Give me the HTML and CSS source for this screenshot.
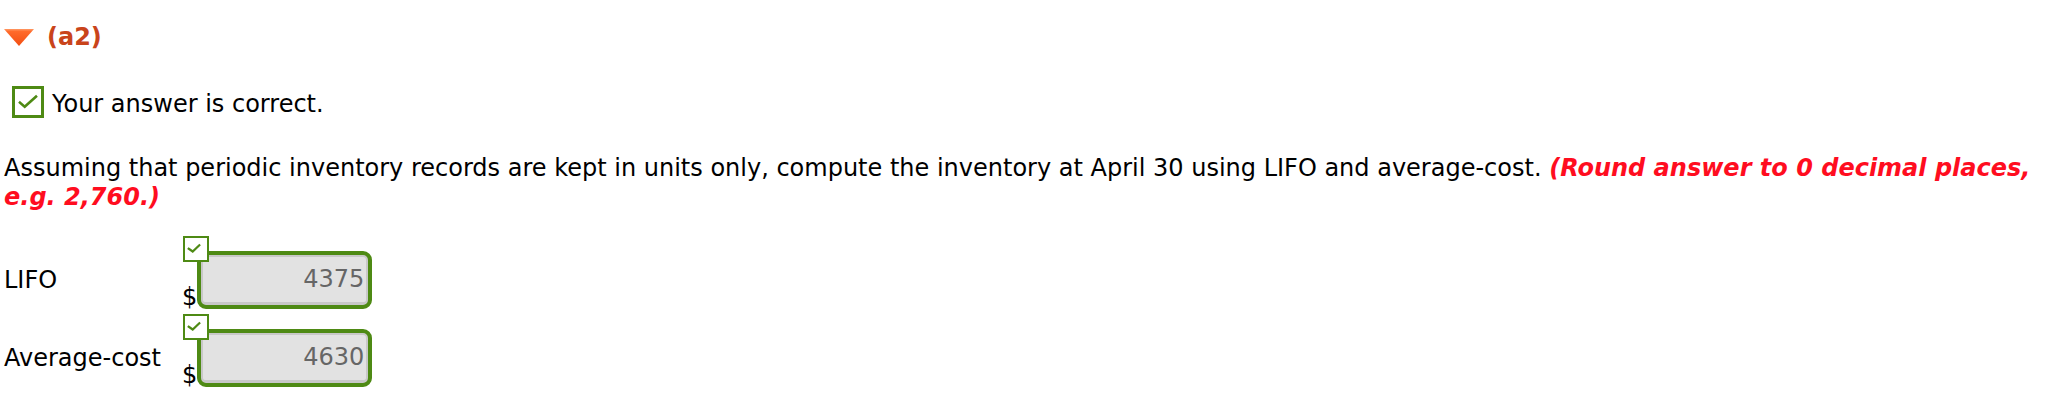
FILE: index.html
```html
<!DOCTYPE html>
<html lang="en">
<head>
<meta charset="utf-8">
<title>(a2)</title>
<link rel="stylesheet" href="styles.css">
</head>
<body>
<div class="part">
  <div class="part-head">
    <svg class="tri" width="30" height="17" viewBox="0 0 30 17" aria-hidden="true">
      <defs>
        <linearGradient id="tg" x1="0" y1="0" x2="0" y2="1">
          <stop offset="0" stop-color="#ff9a66"/>
          <stop offset="0.15" stop-color="#ff6a2a"/>
          <stop offset="1" stop-color="#f24e12"/>
        </linearGradient>
      </defs>
      <polygon points="0,0 30,0 15,17" fill="url(#tg)"/>
    </svg>
    <span class="part-label">(a2)</span>
  </div>

  <div class="feedback">
    <span class="chk chk-big">
      <svg width="26" height="26" viewBox="0 0 26 26" aria-hidden="true"><polyline points="5,13.7 9.7,17.7 21,7.7" fill="none" stroke="#4e8a14" stroke-width="2.6" stroke-linecap="square"/></svg>
    </span>
    <span class="feedback-text">Your answer is correct.</span>
  </div>

  <p class="question"><span class="q-text">Assuming that periodic inventory records are kept in units only, compute the inventory at April 30 using LIFO and average-cost.</span> <em class="hint">(Round answer to 0 decimal places,</em><br><em class="hint">e.g. 2,760.)</em></p>

  <div class="answers">
    <div class="row">
      <div class="label">LIFO</div>
      <div class="cell">
        <span class="chk chk-small">
          <svg width="22" height="22" viewBox="0 0 22 22" aria-hidden="true"><polyline points="3.7,10.7 7.7,13.5 14.3,7.3" fill="none" stroke="#4e8a14" stroke-width="2.2" stroke-linecap="square"/></svg>
        </span>
        <span class="cur">$</span>
        <div class="box"><div class="inp">4375</div></div>
      </div>
    </div>
    <div class="row">
      <div class="label">Average-cost</div>
      <div class="cell">
        <span class="chk chk-small">
          <svg width="22" height="22" viewBox="0 0 22 22" aria-hidden="true"><polyline points="3.7,10.7 7.7,13.5 14.3,7.3" fill="none" stroke="#4e8a14" stroke-width="2.2" stroke-linecap="square"/></svg>
        </span>
        <span class="cur">$</span>
        <div class="box"><div class="inp">4630</div></div>
      </div>
    </div>
  </div>
</div>
</body>
</html>
```

FILE: styles.css
```css
html, body {
  margin: 0;
  padding: 0;
  background: #ffffff;
}

body {
  font-family: "DejaVu Sans", Verdana, sans-serif;
  font-size: 24px;
  color: #000000;
}

.part {
  padding: 22px 4px 0 4px;
}

.part-head {
  display: flex;
  align-items: center;
  height: 30px;
}

.tri {
  display: block;
  flex: none;
}

.part-label {
  margin-left: 13px;
  font-weight: bold;
  color: #c9441b;
  line-height: 30px;
}

.feedback {
  display: flex;
  align-items: flex-start;
  height: 32px;
  margin-top: 34px;
  padding-left: 8px;
}

.chk {
  display: flex;
  align-items: center;
  justify-content: center;
  box-sizing: border-box;
  background: #ffffff;
  border-style: solid;
  border-color: #4e8a14;
}

.chk-big {
  width: 32px;
  height: 32px;
  border-width: 3px;
  flex: none;
}

.feedback-text {
  margin-left: 8px;
  line-height: 32px;
  padding-top: 2px;
}

.question {
  margin: 36px 0 0 0;
  line-height: 29px;
}

.hint {
  color: #ff0d1f;
  font-weight: bold;
  font-style: italic;
}

.answers {
  margin-top: 24px;
}

.row {
  display: flex;
  align-items: center;
  padding-top: 15px;
  margin-bottom: 5px;
}

.label {
  width: 178px;
  flex: none;
  line-height: 29px;
}

.cell {
  position: relative;
  display: flex;
  align-items: flex-end;
}

.chk-small {
  position: absolute;
  left: 1px;
  top: -15px;
  width: 26px;
  height: 26px;
  border-width: 2px;
  z-index: 2;
}

.cur {
  line-height: 24px;
}

.box {
  box-sizing: border-box;
  width: 175px;
  height: 58px;
  border: 4px solid #4e8a14;
  border-radius: 9px;
  background: #4e8a14;
}

.inp {
  box-sizing: border-box;
  height: 100%;
  background: #e2e2e2;
  border: 2px solid #c8c8c8;
  border-bottom-width: 3px;
  border-radius: 5px;
  color: #666666;
  text-align: right;
  line-height: 45px;
  padding-right: 2px;
}
```
